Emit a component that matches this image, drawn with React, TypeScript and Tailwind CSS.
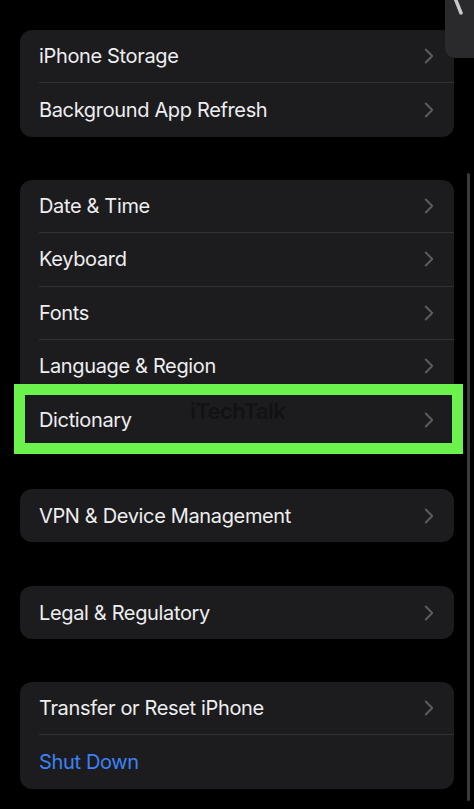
import { ChevronRight } from "lucide-react";

type Row = { label: string; blue?: boolean };

const groups: Row[][] = [
  [{ label: "iPhone Storage" }, { label: "Background App Refresh" }],
  [
    { label: "Date & Time" },
    { label: "Keyboard" },
    { label: "Fonts" },
    { label: "Language & Region" },
    { label: "Dictionary" },
  ],
  [{ label: "VPN & Device Management" }],
  [{ label: "Legal & Regulatory" }],
  [{ label: "Transfer or Reset iPhone" }, { label: "Shut Down", blue: true }],
];

const gapClass = ["", "mt-[43.4px]", "mt-[42.5px]", "mt-[43.7px]", "mt-[42.7px]"];

const SettingsRow = ({ row, last }: { row: Row; last: boolean }) => {
  const highlight = row.label === "Dictionary";
  return (
    <div className="relative h-[53.3px] pl-[19px]">
      <div
        className={
          "h-full flex items-center justify-between pr-[12px] " +
          (last ? "" : "border-b border-[#313133]")
        }
      >
        <span
          className={
            "text-[20px] leading-none tracking-[-0.35px] " +
            (row.blue ? "text-[#3c82f6]" : "text-[#eeeef0]")
          }
        >
          {row.label}
        </span>
        {!row.blue && (
          <ChevronRight size={26} strokeWidth={1.8} className="text-[#5c5c60]" />
        )}
      </div>
      {highlight && (
        <>
          {/* watermark + highlight frame laid over the row */}
          <span className="absolute left-[170px] top-[2px] text-[22px] font-semibold text-[#121214] tracking-tight">
            iTechTalk
          </span>
          <div className="absolute -left-[6px] -top-[9px] -right-[9px] -bottom-[8px] border-[11px] border-[#6cf24c]" />
        </>
      )}
    </div>
  );
};

export default function App() {
  return (
    <div
      className="relative w-[474px] h-[809px] bg-black overflow-hidden"
      style={{ fontFamily: "Inter, 'Noto Sans', sans-serif" }}
    >
      {/* partial overlay at top right */}
      <div className="absolute right-0 top-0 w-[29px] h-[58px] bg-[#2a2a2c] rounded-bl-[10px] overflow-hidden">
        <svg width="29" height="58" viewBox="0 0 29 58">
          <path d="M10 -2 L16 13" stroke="#c8c8ca" strokeWidth="3.5" strokeLinecap="round" />
        </svg>
      </div>

      {/* scroll indicator */}
      <div className="absolute left-[467px] top-[173px] w-[3px] h-[628px] rounded-full bg-[#3a3a3c]" />

      <div className="flex flex-col pt-[30px] px-[20px]">
        {groups.map((g, gi) => (
          <div key={gi} className={"bg-[#1c1c1e] rounded-[12px] " + gapClass[gi]}>
            {g.map((r, i) => (
              <SettingsRow key={r.label} row={r} last={i === g.length - 1} />
            ))}
          </div>
        ))}
      </div>
    </div>
  );
}
